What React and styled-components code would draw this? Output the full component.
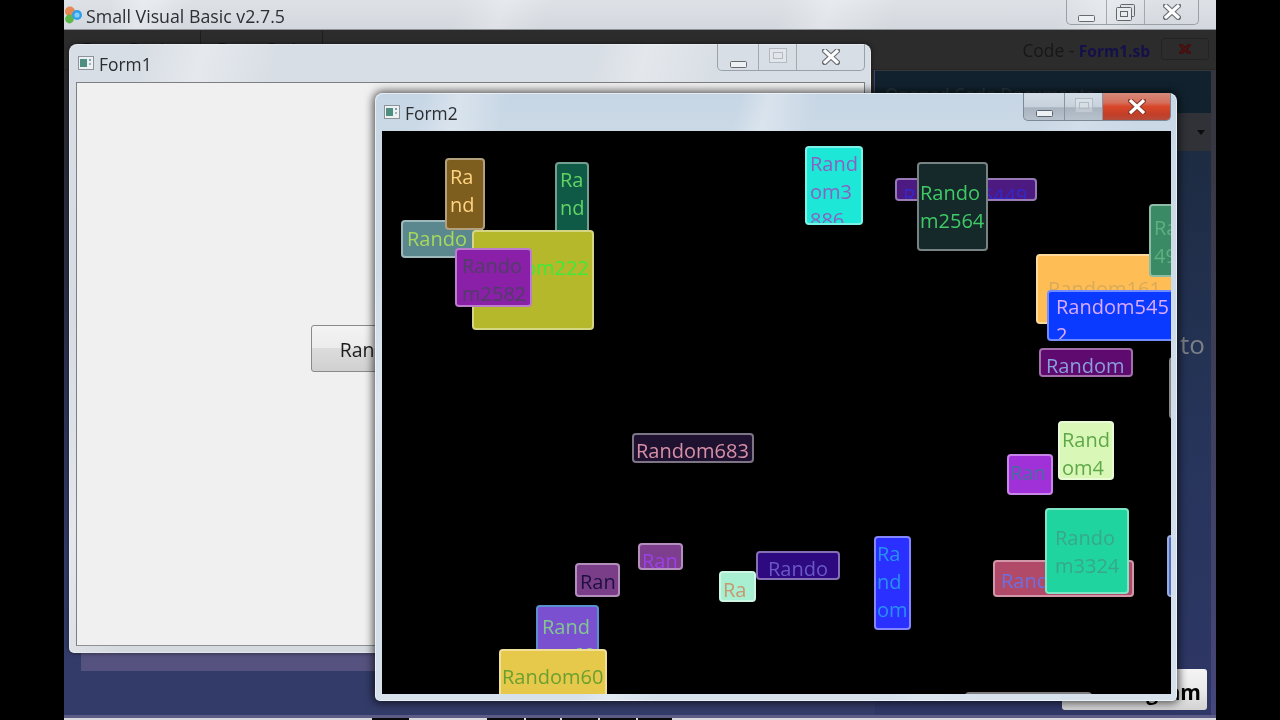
import React from 'react';
import styled, { createGlobalStyle, css } from 'styled-components';

const Global = createGlobalStyle`
  html, body { margin: 0; padding: 0; background: #000; }
  #root { width: 1280px; height: 720px; overflow: hidden; }
  * { box-sizing: border-box; }
`;

const FONT = `"Open Sans", "Noto Sans", "Liberation Sans", sans-serif`;

const Stage = styled.div`
  width: 1280px;
  height: 720px;
  background: #000;
  display: flex;
  justify-content: center;
  font-family: ${FONT};
  overflow: hidden;
  filter: blur(0.4px);
`;

const Ide = styled.div`
  position: relative;
  width: 1152px;
  height: 720px;
  display: flex;
  flex-direction: column;
  overflow: hidden;
`;

const glassMain = css`
  background:
    linear-gradient(108deg, transparent 4%, rgba(255,255,255,.35) 7%, transparent 11%, transparent 34%, rgba(255,255,255,.25) 38%, transparent 42%, transparent 62%, rgba(255,255,255,.3) 66%, transparent 72%, transparent 86%, rgba(255,255,255,.3) 90%, transparent 94%),
    linear-gradient(180deg, #dee2e7, #d3d8de);
`;

const TitleBar = styled.header`
  ${glassMain}
  height: 30px;
  flex: none;
  display: flex;
  align-items: flex-start;
  padding: 6px 17px 0 0;
  border-bottom: 1px solid #8f9398;
`;

const AppName = styled.span`
  font-size: 17.75px;
  line-height: 20px;
  color: #2c2f33;
  margin-left: 3px;
  flex: 1;
  white-space: nowrap;
`;

const ButtonGroup = styled.div`
  display: flex;
  height: ${p => p.$h}px;
  margin-top: ${p => p.$mt || 0}px;
  border: 1px solid ${p => p.$edge || '#9aa0a8'};
  border-top: none;
  border-radius: 0 0 5px 5px;
  overflow: hidden;
  background: ${p => p.$bg || 'transparent'};
`;

const MainButtons = styled(ButtonGroup)`
  margin-top: -6px;
`;

const WinButton = styled.div`
  width: ${p => p.$w}px;
  display: flex;
  align-items: center;
  justify-content: center;
  border-right: 1px solid ${p => p.$edge || '#a4a9b0'};
  ${p => p.$close && css`
    background: linear-gradient(180deg, #d88a7c 0%, #d4705c 35%, #d9472a 50%, #c33e28 80%, #b34c3c 100%);
  `}
  &:last-child { border-right: none; }
`;

const Toolbar = styled.div`
  height: 40px;
  flex: none;
  display: flex;
  align-items: flex-start;
  background: #2d2c2c;
  border-bottom: 1px solid #262626;
  padding-left: 3px;
`;

const Tab = styled.div`
  width: ${p => p.$w}px;
  height: 28px;
  margin-top: 1px;
  border-right: 1px solid #1c1c1c;
  color: #141414;
  font-size: 17px;
  font-weight: 600;
  line-height: 28px;
  padding-top: 4px;
  text-align: center;
  white-space: nowrap;
`;

const ToolbarSpring = styled.div`
  flex: 1;
`;

const CodeLabel = styled.div`
  margin-top: 8px;
  font-size: 17.4px;
  line-height: 24px;
  color: #171717;
  white-space: nowrap;
`;

const CodeFile = styled.span`
  font-weight: 700;
  font-size: 15.5px;
  color: #13104a;
`;

const TabClose = styled.div`
  width: 48px;
  height: 22px;
  margin: 8px 7px 0 11px;
  border: 1px solid #232323;
  border-radius: 3px;
  display: flex;
  align-items: center;
  justify-content: center;
`;

const Workspace = styled.div`
  flex: 1;
  display: flex;
  padding-right: 5px;
  background: linear-gradient(180deg, #35353c 0%, #3e3f58 50%, #45467a 100%);
  min-height: 0;
`;

const LeftPane = styled.main`
  flex: 1;
  display: flex;
  padding: 0 0 44px 17px;
  background: linear-gradient(180deg, #2b2b30 0%, #2a2f44 30%, #333b68 75%);
`;

const EditorSlot = styled.div`
  flex: 1;
  background: linear-gradient(180deg, #2a2a2c 0, #2a2a2c 500px, #56527f 500px);
  border-right: 1px solid #46456f;
`;

const RightPane = styled.aside`
  width: 336px;
  flex: none;
  display: flex;
  flex-direction: column;
`;

const PaneHeading = styled.div`
  height: 42px;
  flex: none;
  background: #11222e;
  color: #27343d;
  font-size: 17px;
  font-weight: 600;
  padding: 11px 0 0 10px;
  line-height: 24px;
  white-space: nowrap;
  margin-top: 1px;
`;

const DropRow = styled.div`
  height: 38px;
  flex: none;
  background: #313238;
  display: flex;
  align-items: center;
  justify-content: flex-end;
  padding-right: 6px;
`;

const Caret = styled.span`
  width: 0;
  height: 0;
  border-left: 4px solid transparent;
  border-right: 4px solid transparent;
  border-top: 5px solid #0c0c0e;
`;

const DocList = styled.div`
  flex: 1;
  display: flex;
  flex-direction: column;
  align-items: flex-end;
  background: linear-gradient(180deg, #1d2c42 0%, #26345a 50%, #2f3766 100%);
`;

const DocNote = styled.span`
  margin: 175px 6px 0 0;
  font-size: 26px;
  line-height: 36px;
  color: #7b8087;
`;

const RunButton = styled.div`
  margin: auto 4px 5px 0;
  width: 145px;
  height: 41px;
  border-radius: 3px;
  background: linear-gradient(180deg, #f4f4f4 0%, #eaeaea 50%, #d2d2d2 100%);
  color: #000;
  font-weight: 700;
  font-size: 21px;
  line-height: 46px;
  text-align: right;
  padding-right: 6px;
  white-space: nowrap;
`;

const BottomBar = styled.footer`
  height: 5px;
  flex: none;
  background: #5c5c86;
  display: flex;
  align-items: flex-end;
`;

const Strip = styled.div`
  flex: 1;
  height: 2px;
  background: #d8d8dc;
  display: flex;
  gap: 2px;
  padding-left: 308px;
`;

const StripCell = styled.div`
  width: ${p => p.$w}px;
  margin-left: ${p => p.$gap || 0}px;
  background: #0a0a0a;
`;

/* floating windows of the running program */
const Window = styled.section`
  position: absolute;
  left: ${p => p.$x}px;
  top: ${p => p.$y}px;
  width: 802px;
  height: ${p => p.$h}px;
  display: flex;
  flex-direction: column;
  padding: 0 6px 7px 7px;
  border-radius: 8px 8px 5px 5px;
  ${p => p.$active ? css`
    background:
      linear-gradient(105deg, transparent 5%, rgba(255,255,255,.3) 9%, transparent 14%, transparent 38%, rgba(255,255,255,.3) 41%, transparent 46%, transparent 70%, rgba(255,255,255,.15) 74%, transparent 80%),
      linear-gradient(180deg, #c7d6e5 0, #cbd9e6 40px, #d6e1ec 100%);
    box-shadow: 0 0 9px 2px rgba(0,0,0,.65), inset 0 0 0 1px rgba(255,255,255,.55);
  ` : css`
    background:
      linear-gradient(105deg, transparent 8%, rgba(255,255,255,.35) 14%, transparent 22%, transparent 55%, rgba(255,255,255,.3) 60%, transparent 68%, transparent 84%, rgba(255,255,255,.35) 88%, transparent 92%),
      linear-gradient(180deg, #d8dee5 0, #d5dae0 100%);
    box-shadow: 0 0 5px rgba(0,0,0,.55), inset 0 0 0 1px rgba(255,255,255,.35);
  `}
`;

const WindowTitle = styled.div`
  height: 38px;
  flex: none;
  display: flex;
  align-items: flex-start;
  padding-left: 2px;
`;

const WindowCaption = styled.span`
  margin: 9px 0 0 5px;
  font-size: 17.4px;
  line-height: 22px;
  color: #2a2d31;
  flex: 1;
`;

const FormClient = styled.div`
  flex: 1;
  position: relative;
  background: #f0f0f0;
  border: 1px solid #7d7f82;
  border-bottom-color: #8e9094;
  overflow: hidden;
`;

const FormButton = styled.div`
  position: absolute;
  left: 234px;
  top: 242px;
  width: 134px;
  height: 47px;
  border: 1px solid #8a8a8a;
  border-radius: 3px;
  background: linear-gradient(180deg, #f3f3f3 0%, #ececec 48%, #dcdcdc 50%, #d0d0d0 100%);
  color: #1d1d1d;
  font-size: 19.5px;
  line-height: 47px;
  text-align: center;
`;

const Canvas = styled.div`
  flex: 1;
  position: relative;
  background: #000;
  overflow: hidden;
`;

const Node = styled.div`
  position: absolute;
  left: ${p => p.$x}px;
  top: ${p => p.$y}px;
  width: ${p => p.$w}px;
  height: ${p => p.$h}px;
  padding: ${p => p.$pt}px 0 0 ${p => p.$pl}px;
  background: ${p => p.$bg};
  color: ${p => p.$fg};
  border: 2px solid ${p => p.$edge || 'rgba(255,255,255,.42)'};
  border-radius: 4px;
  overflow: hidden;
  font-size: 20px;
  line-height: 28px;
`;

const NodeLine = styled.div`
  white-space: nowrap;
`;

const ox = 382, oy = 131;
// [page x, y, w, h, background, text colour, text x, first-line centre y, lines, edge]
const NODES = [
  [401, 220, 82, 38, '#5b888e', '#a6d95c', 407, 239, ['Rando']],
  [555, 162, 34, 80, '#0f5a46', '#62d463', 560, 180, ['Ra', 'nd']],
  [445, 158, 40, 72, '#7d5e1f', '#ffd380', 450, 177, ['Ra', 'nd']],
  [472, 230, 122, 100, '#b5b82a', '#3fe93a', 476, 268, ['Random222']],
  [455, 248, 77, 59, '#8a1fa8', '#4f3f66', 462, 266, ['Rando', 'm2582']],
  [805, 146, 58, 79, '#1de8d8', '#8a60c2', 810, 164, ['Rand', 'om3', '886']],
  [895, 178, 142, 23, '#4c1a80', '#3428cc', 903, 196, ['Random5449']],
  [917, 162, 71, 89, '#15282a', '#3fca66', 920, 193, ['Rando', 'm2564']],
  [1036, 254, 150, 70, '#ffbe55', '#d9aa5a', 1048, 289, ['Random161']],
  [1149, 204, 40, 73, '#3b8a66', '#5fb080', 1154, 228, ['Ra', '49']],
  [1047, 290, 140, 51, '#0a3aff', '#dcaaff', 1056, 307, ['Random545', '2']],
  [1039, 348, 94, 29, '#5e0a6e', '#8a9fdc', 1046, 366, ['Random']],
  [1169, 357, 12, 62, '#333', '#333', 1172, 370, []],
  [632, 433, 122, 30, '#1f1230', '#d890a8', 636, 451, ['Random683']],
  [1058, 421, 56, 59, '#d9f8b8', '#5fa848', 1062, 440, ['Rand', 'om4']],
  [1007, 454, 46, 41, '#a030d8', '#4a6ca2', 1010, 473, ['Ran']],
  [993, 560, 141, 37, '#b04a68', '#6a70e2', 1001, 581, ['Random']],
  [1045, 508, 84, 86, '#20d49f', '#38a888', 1055, 538, ['Rando', 'm3324']],
  [1167, 535, 12, 62, '#5070c4', '#5070c4', 1172, 550, []],
  [638, 543, 45, 27, '#7e3e8e', '#9a40e8', 642, 561, ['Ran']],
  [575, 563, 45, 34, '#7a3e88', '#1c1040', 580, 582, ['Ran']],
  [719, 571, 37, 31, '#a8eed0', '#c89870', 723, 590, ['Ra']],
  [756, 551, 84, 29, '#2e0a80', '#6a58c8', 768, 569, ['Rando']],
  [874, 536, 37, 94, '#2a30ff', '#2a90f0', 877, 554, ['Ra', 'nd', 'om']],
  [536, 605, 63, 60, '#7a50d0', '#80c890', 542, 627, ['Rand', 'om60'], '#5a90d0'],
  [499, 649, 108, 60, '#e6c84a', '#6aa030', 502, 677, ['Random60']],
  [965, 692, 127, 12, '#222', '#222', 970, 700, []],
];

function XMark({ size = 18, fg = '#fdfdfd', line = '#6b6f75' }) {
  return (
    <svg width={size} height={size * 0.85} viewBox="0 0 20 17">
      <path d="M3 2 L17 15 M17 2 L3 15" stroke={line} strokeWidth="6" strokeLinecap="square" fill="none" />
      <path d="M3.5 2.5 L16.5 14.5 M16.5 2.5 L3.5 14.5" stroke={fg} strokeWidth="3.6" strokeLinecap="square" fill="none" />
    </svg>
  );
}

function MinMark({ fg = '#eef1f4', line = '#676b70', lift = 0 }) {
  return (
    <svg width="17" height="7" viewBox="0 0 17 7" style={{ marginTop: 14 - lift }}>
      <rect x=".5" y=".5" width="16" height="6" rx="1" fill={fg} stroke={line} />
    </svg>
  );
}

function MaxMark({ faded }) {
  const c = faded ? '#b4bac2' : '#666a70';
  return (
    <svg width="18" height="15" viewBox="0 0 18 15" style={{ marginTop: -3 }}>
      <rect x=".5" y=".5" width="17" height="14" fill={faded ? 'rgba(255,255,255,.25)' : 'none'} stroke={c} />
      <rect x="4.5" y="4.5" width="9" height="6" fill="none" stroke={c} />
    </svg>
  );
}

function RestoreMark() {
  return (
    <svg width="19" height="17" viewBox="0 0 19 17">
      <rect x="4.5" y=".5" width="14" height="12" rx="1" fill="#dfe3e8" stroke="#63676c" />
      <rect x=".5" y="3.5" width="15" height="13" rx="1" fill="#e9ecef" stroke="#63676c" />
      <rect x="4.5" y="7.5" width="7" height="5" fill="none" stroke="#63676c" />
    </svg>
  );
}

function AppLogo() {
  return (
    <svg width="19" height="18" viewBox="0 0 19 18">
      <circle cx="6" cy="5.5" r="5" fill="#e58a55" />
      <circle cx="5.5" cy="13" r="4.4" fill="#5cb84a" />
      <circle cx="13" cy="9" r="5" fill="#2f9fe8" />
      <circle cx="13" cy="9" r="2.6" fill="#7fd0f8" />
    </svg>
  );
}

function FormGlyph() {
  return (
    <svg width="16" height="14" viewBox="0 0 16 14" style={{ marginTop: 12 }}>
      <rect x=".5" y=".5" width="15" height="13" fill="#eef1f4" stroke="#8c9499" />
      <rect x="2" y="3" width="7" height="8" fill="#4f8f82" />
      <rect x="11" y="3" width="2" height="2" fill="#7f9fa8" />
      <rect x="11" y="7" width="2" height="2" fill="#9fb4b8" />
    </svg>
  );
}

export default function App() {
  return (
    <>
      <Global />
      <Stage>
        <Ide>
          <TitleBar>
            <AppLogo />
            <AppName>Small Visual Basic v2.7.5</AppName>
            <MainButtons $h={25}>
              <WinButton $w={40}><MinMark lift={1} /></WinButton>
              <WinButton $w={38}><RestoreMark /></WinButton>
              <WinButton $w={53}><XMark /></WinButton>
            </MainButtons>
          </TitleBar>
          <Toolbar>
            <Tab $w={134}>Form Design</Tab>
            <Tab $w={122}>Form Code</Tab>
            <ToolbarSpring />
            <CodeLabel>Code - <CodeFile>Form1.sb</CodeFile></CodeLabel>
            <TabClose><XMark size={12} fg="#4d1212" line="#3a1010" /></TabClose>
          </Toolbar>
          <Workspace>
            <LeftPane><EditorSlot /></LeftPane>
            <RightPane>
              <PaneHeading>Opened Code Documents</PaneHeading>
              <DropRow><Caret /></DropRow>
              <DocList>
                <DocNote>to</DocNote>
                <RunButton>Run Program</RunButton>
              </DocList>
            </RightPane>
          </Workspace>
          <BottomBar>
            <Strip>
              <StripCell $w={37} />
              <StripCell $w={37} $gap={76} />
              <StripCell $w={34} />
              <StripCell $w={36} />
              <StripCell $w={36} />
              <StripCell $w={34} />
            </Strip>
          </BottomBar>

          <Window $x={5} $y={44} $h={609}>
            <WindowTitle>
              <FormGlyph />
              <WindowCaption>Form1</WindowCaption>
              <ButtonGroup $h={27}>
                <WinButton $w={41}><MinMark /></WinButton>
                <WinButton $w={38}><MaxMark faded /></WinButton>
                <WinButton $w={67}><XMark /></WinButton>
              </ButtonGroup>
            </WindowTitle>
            <FormClient>
              <FormButton>Random</FormButton>
            </FormClient>
          </Window>

          <Window $x={311} $y={93} $h={608} $active>
            <WindowTitle>
              <FormGlyph />
              <WindowCaption>Form2</WindowCaption>
              <ButtonGroup $h={28} $edge="#7d8894" $bg="linear-gradient(180deg, #d4dde6 0%, #c8d2dc 50%, #a9b3bf 55%, #b8c2cd 100%)">
                <WinButton $w={41} $edge="#8a95a1"><MinMark line="#5a6470" /></WinButton>
                <WinButton $w={38} $edge="#8a95a1"><MaxMark faded /></WinButton>
                <WinButton $w={67} $close><XMark fg="#ffffff" line="#8a3a2c" /></WinButton>
              </ButtonGroup>
            </WindowTitle>
            <Canvas>
              {NODES.map(([x, y, w, h, bg, fg, tx, cy, lines, edge], i) => (
                <Node
                  key={i}
                  $x={x - ox}
                  $y={y - oy}
                  $w={w}
                  $h={h}
                  $bg={bg}
                  $fg={fg}
                  $edge={edge}
                  $pl={tx - x - 2}
                  $pt={Math.round(cy - 14 - y - 2)}
                >
                  {lines.map(l => <NodeLine key={l}>{l}</NodeLine>)}
                </Node>
              ))}
            </Canvas>
          </Window>
        </Ide>
      </Stage>
    </>
  );
}
